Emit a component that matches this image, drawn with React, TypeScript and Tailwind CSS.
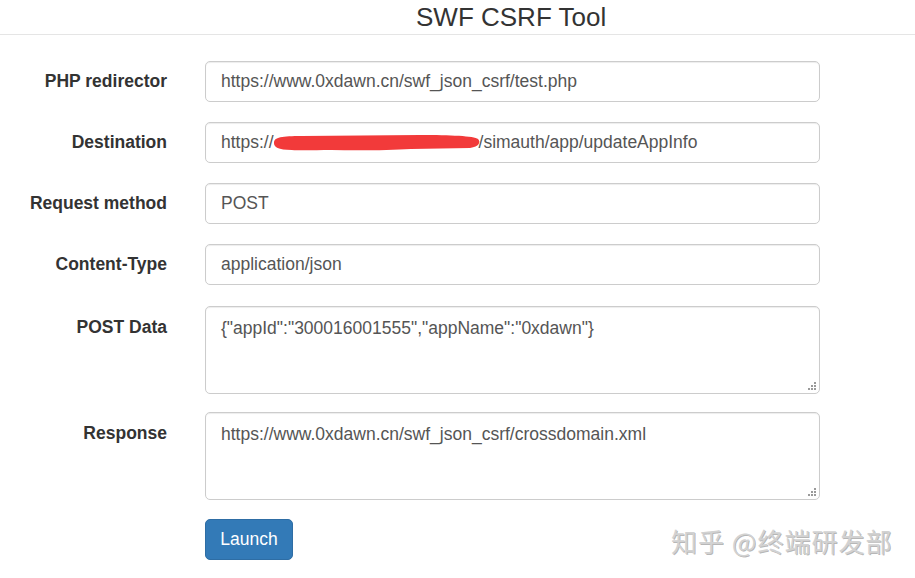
import React from "react";

const font = { fontFamily: '"Liberation Sans", Arial, sans-serif' };

function Handle() {
  return (
    <svg className="absolute right-[3px] bottom-[3px]" width="9" height="9" viewBox="0 0 9 9">
      <g fill="#9a9a9a">
        <rect x="7" y="1" width="2" height="2" />
        <rect x="4" y="4" width="2" height="2" />
        <rect x="7" y="4" width="2" height="2" />
        <rect x="1" y="7" width="2" height="2" />
        <rect x="4" y="7" width="2" height="2" />
        <rect x="7" y="7" width="2" height="2" />
      </g>
    </svg>
  );
}

function Field({ children, tall = false }: { children: React.ReactNode; tall?: boolean }) {
  return (
    <div
      className={`relative w-[615px] border border-[#cccccc] rounded-[5px] bg-white px-[15px] text-[17.5px] text-[#555555] shadow-[inset_0_1px_1px_rgba(0,0,0,0.075)] ${
        tall ? "h-[88px] pt-[8px]" : "h-[41px] flex items-center"
      }`}
    >
      {children}
      {tall && <Handle />}
    </div>
  );
}

function Label({ children, top = false }: { children: React.ReactNode; top?: boolean }) {
  return (
    <div
      className={`w-[167px] text-right font-bold text-[17.5px] text-[#333333] ${
        top ? "pt-[8px]" : "h-[41px] flex items-center justify-end"
      }`}
    >
      {children}
    </div>
  );
}

export default function App() {
  return (
    <div className="relative w-[915px] h-[578px] bg-white overflow-hidden" style={font}>
      <div className="h-[35px] border-b border-[#e5e5e5] flex items-center">
        <div className="pl-[416px] text-[26px] leading-[30px] text-[#333333]">SWF CSRF Tool</div>
      </div>
      <div className="pt-[26px] flex flex-col gap-[20px]">
        <div className="flex gap-[38px]">
          <Label>PHP redirector</Label>
          <Field>https://www.0xdawn.cn/swf_json_csrf/test.php</Field>
        </div>
        <div className="flex gap-[38px]">
          <Label>Destination</Label>
          <Field>
            <span className="whitespace-nowrap flex items-center">
              https://
              <svg width="210" height="20" viewBox="0 0 212 20" className="-ml-[2px] -mr-[3px]">
                <path
                  d="M2 10 C2 4 10 3 30 3 C70 3 110 2 150 2 C180 2 204 3 208 6 C211 9 209 14 200 15 C180 15 160 16 140 16 C120 17 90 18 60 17 C45 17 30 18 20 17 C6 17 2 14 2 10 Z"
                  fill="#f23a3a"
                />
              </svg>
              /simauth/app/updateAppInfo
            </span>
          </Field>
        </div>
        <div className="flex gap-[38px]">
          <Label>Request method</Label>
          <Field>POST</Field>
        </div>
        <div className="flex gap-[38px]">
          <Label>Content-Type</Label>
          <Field>application/json</Field>
        </div>
        <div className="flex gap-[38px] mt-[1px]">
          <Label top>POST Data</Label>
          <Field tall>{'{"appId":"300016001555","appName":"0xdawn"}'}</Field>
        </div>
        <div className="flex gap-[38px] -mt-[2px]">
          <Label top>Response</Label>
          <Field tall>https://www.0xdawn.cn/swf_json_csrf/crossdomain.xml</Field>
        </div>
        <div className="flex pl-[205px] -mt-[1px]">
          <button className="w-[88px] h-[41px] rounded-[5px] bg-[#337ab7] border border-[#2e6da4] text-white text-[17.5px]">
            Launch
          </button>
        </div>
      </div>
      <div
        className="absolute left-[671px] top-[524px] text-[26px] leading-[34px] text-[#d2d2d2] whitespace-nowrap tracking-[1px]"
        style={{
          fontFamily: '"Noto Sans CJK SC", sans-serif',
          textShadow: "1px 1px 0 rgba(0,0,0,0.28)",
        }}
      >
        知乎 @终端研发部
      </div>
    </div>
  );
}
